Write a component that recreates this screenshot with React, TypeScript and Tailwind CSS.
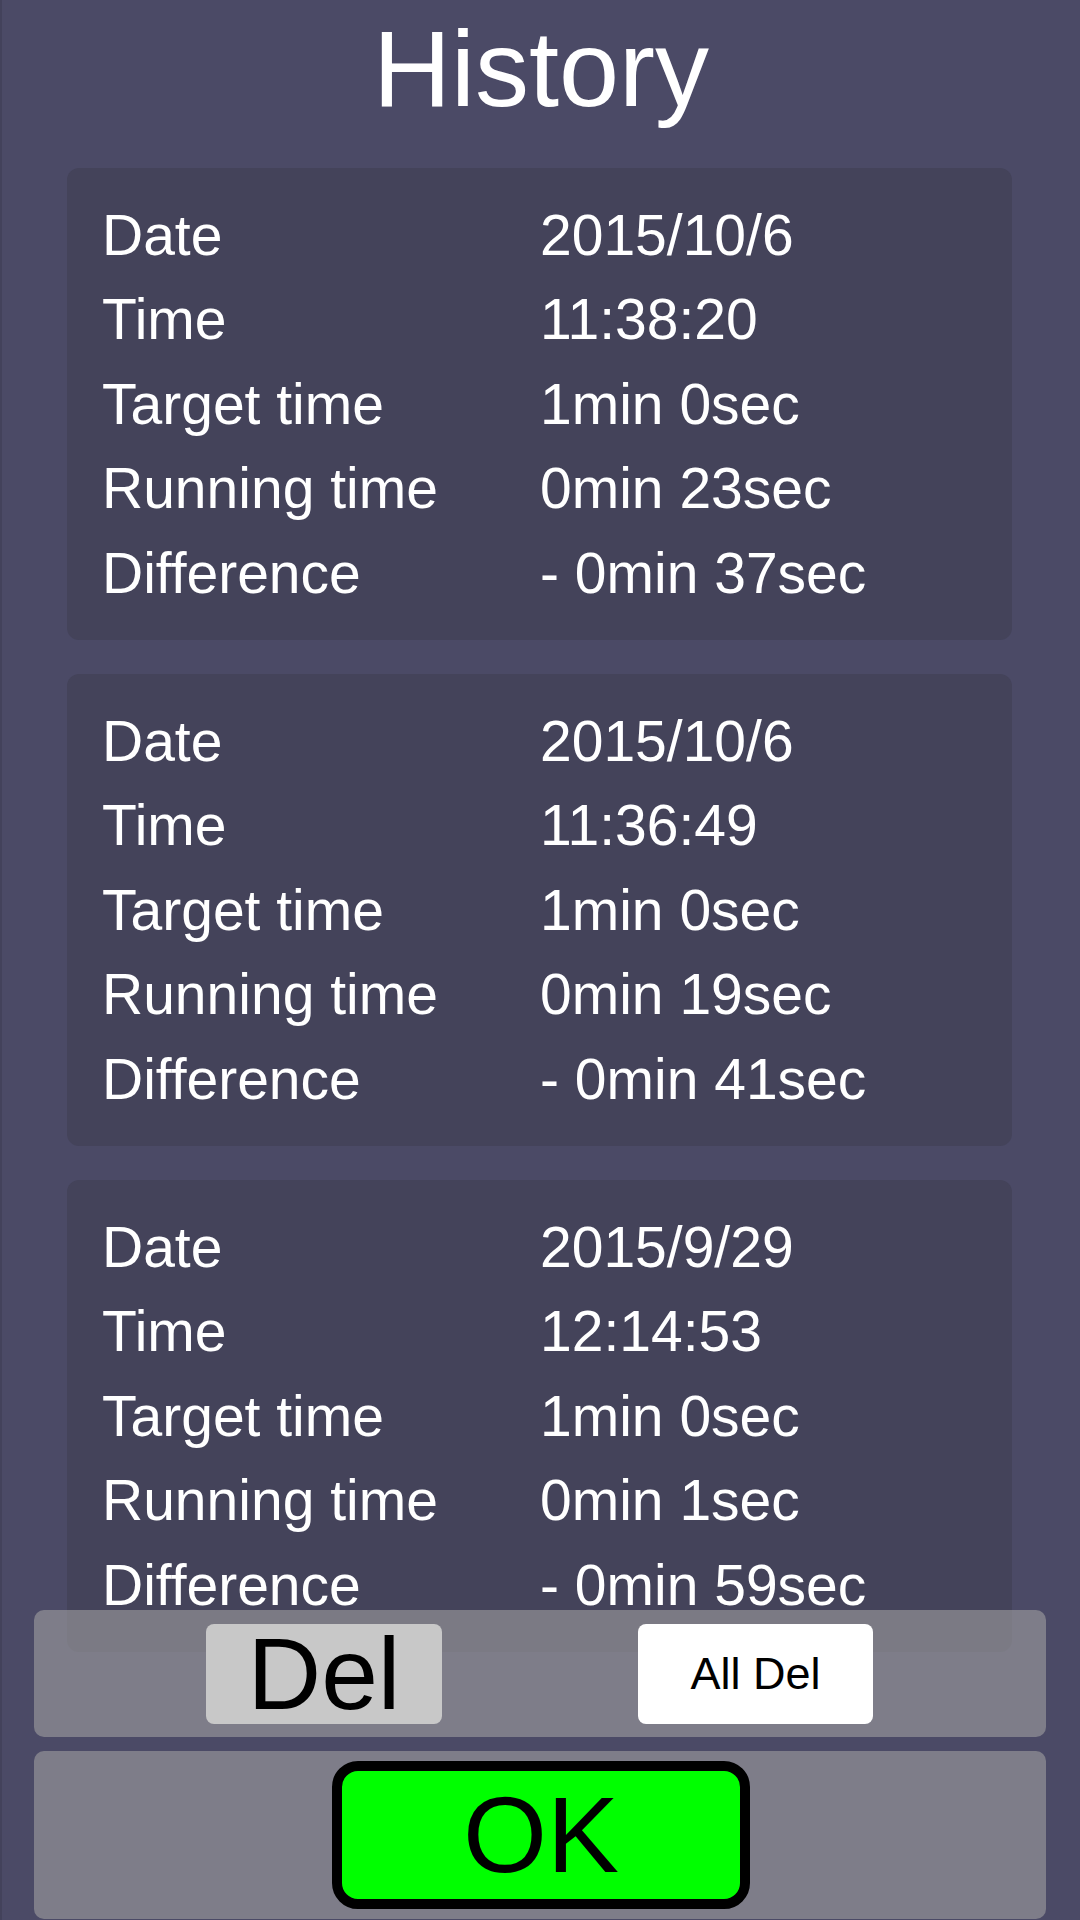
const records = [
  {
    date: "2015/10/6",
    time: "11:38:20",
    target: "1min 0sec",
    running: "0min 23sec",
    diff: "- 0min 37sec",
  },
  {
    date: "2015/10/6",
    time: "11:36:49",
    target: "1min 0sec",
    running: "0min 19sec",
    diff: "- 0min 41sec",
  },
  {
    date: "2015/9/29",
    time: "12:14:53",
    target: "1min 0sec",
    running: "0min 1sec",
    diff: "- 0min 59sec",
  },
];

const HistoryCard = ({ rec }: { rec: (typeof records)[number] }) => {
  const rows = [
    ["Date", rec.date],
    ["Time", rec.time],
    ["Target time", rec.target],
    ["Running time", rec.running],
    ["Difference", rec.diff],
  ];

  return (
    <div className="rounded-[12px] bg-[#44435a] pl-[35px] py-[25px]">
      {rows.map(([label, value]) => (
        <div
          key={label}
          className="grid grid-cols-[438px_1fr] text-[57px] leading-[84.4px] text-white whitespace-nowrap"
        >
          <span>{label}</span>
          <span>{value}</span>
        </div>
      ))}
    </div>
  );
};

export default function App() {
  return (
    <div
      className="relative h-[1920px] w-[1080px] overflow-hidden bg-[#4b4a66] border-l-2 border-[#43425b]"
      style={{ fontFamily: '"Liberation Sans", Arial, sans-serif' }}
    >
      {/* Title */}
      <h1 className="pt-[15px] mb-[45px] text-center text-[108px] leading-[108px] text-white">
        History
      </h1>

      {/* History list */}
      <div className="flex flex-col gap-[34px] pl-[65px] pr-[68px]">
        {records.map((rec, i) => (
          <HistoryCard key={i} rec={rec} />
        ))}
      </div>

      {/* Bottom controls, overlaying the list */}
      <div className="absolute left-[32px] right-[34px] top-[1610px] flex flex-col gap-[14px]">
        <div className="h-[127px] rounded-[10px] bg-[rgba(160,160,160,0.6)] flex items-center">
          <button className="ml-[172px] w-[236px] h-[100px] rounded-[8px] bg-[#c8c8c8] text-black text-[102px] leading-none flex items-center justify-center">
            Del
          </button>
          <button className="ml-[196px] w-[235px] h-[100px] rounded-[8px] bg-white text-black text-[45px] leading-none flex items-center justify-center">
            All Del
          </button>
        </div>

        <div className="h-[168px] rounded-[10px] bg-[rgba(160,160,160,0.6)] flex justify-center pt-[10px]">
          <button className="ml-[2px] w-[418px] h-[148px] rounded-[26px] border-[10px] border-black bg-[#00ff00] text-black text-[108px] leading-none flex items-center justify-center">
            OK
          </button>
        </div>
      </div>
    </div>
  );
}
